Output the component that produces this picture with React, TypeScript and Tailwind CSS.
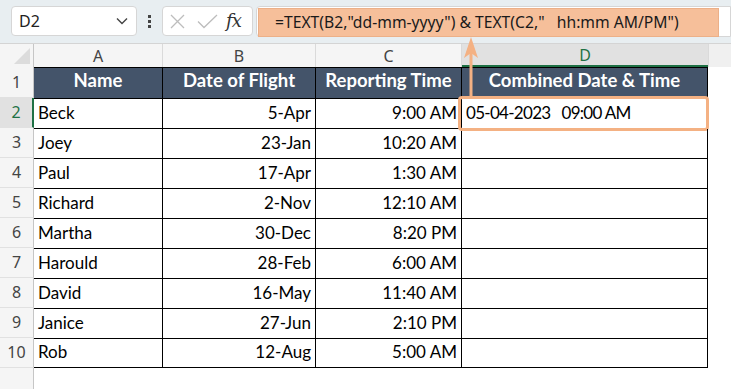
import React from 'react'

const rows = [
  { name: 'Beck', date: '5-Apr', time: '9:00 AM' },
  { name: 'Joey', date: '23-Jan', time: '10:20 AM' },
  { name: 'Paul', date: '17-Apr', time: '1:30 AM' },
  { name: 'Richard', date: '2-Nov', time: '12:10 AM' },
  { name: 'Martha', date: '30-Dec', time: '8:20 PM' },
  { name: 'Harould', date: '28-Feb', time: '6:00 AM' },
  { name: 'David', date: '16-May', time: '11:40 AM' },
  { name: 'Janice', date: '27-Jun', time: '2:10 PM' },
  { name: 'Rob', date: '12-Aug', time: '5:00 AM' },
]

const cellFont = "font-['Lato',sans-serif]"
const uiFont = "font-['Noto_Sans','Open_Sans',sans-serif]"

function RowHead({ n, active }: { n: number; active?: boolean }) {
  return (
    <div
      className={`w-[34px] shrink-0 flex items-end justify-center pb-[3px] border-b border-[#e1e1e1] text-[16px] ${uiFont} ${
        active
          ? 'bg-[#e1e1e1] text-[#1e7145] border-r-2 border-r-[#1e7145]'
          : 'bg-[#f5f5f5] text-[#444] border-r border-r-[#c6c6c6]'
      }`}
    >
      {n}
    </div>
  )
}

export default function App() {
  return (
    <div className="relative w-[731px] h-[389px] overflow-hidden bg-white">
      {/* barra de formula */}
      <div className="h-[44px] bg-[#e8eef1] flex items-start pt-[6px] border-b border-[#d4d4d4]">
        <div className={`ml-[11px] w-[126px] h-[30px] bg-white border border-[#d6d6d6] rounded-[4px] flex items-center justify-between pl-[7px] pr-[8px] text-[16px] text-[#222] ${uiFont}`}>
          <span>D2</span>
          <svg width="12" height="8" viewBox="0 0 12 8">
            <path d="M1 1.5 L6 6.5 L11 1.5" fill="none" stroke="#444" strokeWidth="1.4" />
          </svg>
        </div>
        <div className="w-[25px] h-[30px] flex flex-col items-center justify-center gap-[2px]">
          <span className="w-[3px] h-[3px] bg-[#444]" />
          <span className="w-[3px] h-[3px] bg-[#444]" />
          <span className="w-[3px] h-[3px] bg-[#444]" />
        </div>
        <div className="w-[91px] h-[30px] bg-white border border-[#d6d6d6] rounded-[4px] flex items-center pl-[6px] gap-[11px]">
          <svg width="17" height="17" viewBox="0 0 17 17">
            <path d="M2 2 L15 15 M15 2 L2 15" stroke="#bdbdbd" strokeWidth="1.3" />
          </svg>
          <svg width="21" height="15" viewBox="0 0 21 15">
            <path d="M1 7.5 L7 13.5 L20 1" fill="none" stroke="#bdbdbd" strokeWidth="1.3" />
          </svg>
          <span className="font-['DejaVu_Serif',serif] italic text-[18px] leading-none text-[#333] -ml-[3px] tracking-[-1px]">fx</span>
        </div>
        <div className="ml-[3px] flex-1 h-[31px] bg-white border border-[#d6d6d6] rounded-l-[4px] flex items-start pt-[1px] pl-[1px]">
          <div className={`w-[461px] h-[29px] bg-[#f6bf9a] border border-[#ecb088] flex items-center pl-[16px] text-[15.7px] text-[#1a1a1a] whitespace-pre ${uiFont}`}>
            {'=TEXT(B2,"dd-mm-yyyy") & TEXT(C2,"   hh:mm AM/PM")'}
          </div>
        </div>
      </div>

      {/* letras das colunas */}
      <div className={`flex h-[23px] text-[16px] ${uiFont}`}>
        <div className="w-[34px] shrink-0 bg-[#f5f5f5] border-r border-[#c6c6c6] flex items-end justify-end p-[3px]">
          <svg width="16" height="16" viewBox="0 0 16 16">
            <path d="M16 0 L16 16 L0 16 Z" fill="#dcdcdc" />
          </svg>
        </div>
        <div className="w-[129px] bg-[#f5f5f5] border-r border-[#dadada] flex items-center justify-center text-[#444]">A</div>
        <div className="w-[153px] bg-[#f5f5f5] border-r border-[#dadada] flex items-center justify-center text-[#444]">B</div>
        <div className="w-[146px] bg-[#f5f5f5] border-r border-[#dadada] flex items-center justify-center text-[#444]">C</div>
        <div className="w-[246px] bg-[#e1e1e1] border-b-2 border-[#1e7145] flex items-center justify-center text-[#1e7145]">D</div>
        <div className="flex-1 bg-[#f0f0f0] border-l border-[#dadada]" />
      </div>

      {/* linha de cabecalho */}
      <div className="flex h-[31px]">
        <RowHead n={1} />
        <div className={`flex border-t border-black bg-[#44546a] text-white font-bold text-[18.5px] ${cellFont}`}>
          <div className="w-[129px] border-r border-black flex items-end justify-center pb-[3px]">Name</div>
          <div className="w-[153px] border-r border-black flex items-end justify-center pb-[3px]">Date of Flight</div>
          <div className="w-[146px] border-r border-black flex items-end justify-center pb-[3px]">Reporting Time</div>
          <div className="w-[246px] border-r border-black flex items-end justify-center pb-[3px]">Combined Date &amp; Time</div>
        </div>
      </div>

      {rows.map((r, i) => (
        <div key={r.name} className="flex h-[30px]">
          <RowHead n={i + 2} active={i === 0} />
          <div className={`flex border-t border-black text-[17px] text-black ${cellFont} ${i === rows.length - 1 ? 'border-b' : ''}`}>
            <div className="w-[129px] border-r border-black flex items-end pl-[4px] pb-[3px]">{r.name}</div>
            <div className="w-[153px] border-r border-black flex items-end justify-end pr-[4px] pb-[3px]">{r.date}</div>
            <div className="w-[146px] border-r border-black flex items-end justify-end pr-[4px] pb-[3px]">{r.time}</div>
            <div className="relative w-[246px] border-r border-black flex items-end pl-[4px] pb-[3px] whitespace-pre">
              {i === 0 && (
                <>
                  <div className="absolute -left-[4px] -top-[3px] w-[251px] h-[35px] border-[3px] border-[#f4b183] rounded-[4px]" />
                  <span className="relative tracking-[-0.7px]">{'05-04-2023   09:00 AM'}</span>
                </>
              )}
            </div>
          </div>
        </div>
      ))}

      <div className="flex h-[30px]">
        <div className="w-[34px] bg-[#f5f5f5] border-r border-[#c6c6c6]" />
      </div>

      {/* seta */}
      <svg className="absolute left-[462px] top-[36px]" width="18" height="61" viewBox="0 0 18 61">
        <path d="M9 16 L9 61" stroke="#f4b183" strokeWidth="3" />
        <path d="M9 1 L16 22 L9 17 L2 22 Z" fill="#f4b183" />
      </svg>
    </div>
  )
}
